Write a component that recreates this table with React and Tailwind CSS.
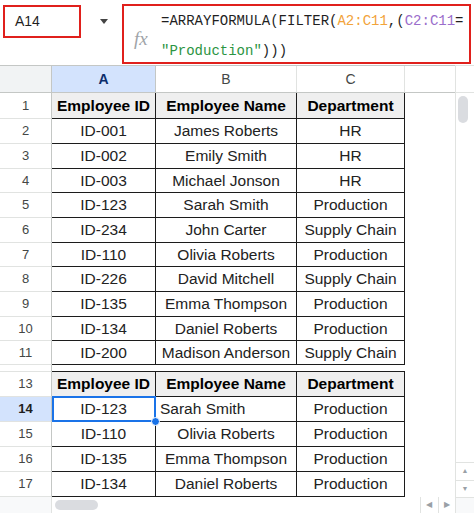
const top = [
  ["ID-001", "James Roberts", "HR"],
  ["ID-002", "Emily Smith", "HR"],
  ["ID-003", "Michael Jonson", "HR"],
  ["ID-123", "Sarah Smith", "Production"],
  ["ID-234", "John Carter", "Supply Chain"],
  ["ID-110", "Olivia Roberts", "Production"],
  ["ID-226", "David Mitchell", "Supply Chain"],
  ["ID-135", "Emma Thompson", "Production"],
  ["ID-134", "Daniel Roberts", "Production"],
  ["ID-200", "Madison Anderson", "Supply Chain"],
];

const result = [
  ["ID-123", "Sarah Smith", "Production"],
  ["ID-110", "Olivia Roberts", "Production"],
  ["ID-135", "Emma Thompson", "Production"],
  ["ID-134", "Daniel Roberts", "Production"],
];

const heights = ["h-[25px]", "h-[25px]", "h-[25px]", "h-[24px]", "h-[25px]", "h-[25px]", "h-[24px]", "h-[25px]", "h-[25px]", "h-[24px]", "h-[24px]"];

const RowNum = ({ n, active }) => (
  <div
    className={
      "w-[52px] shrink-0 flex items-center justify-center border-r border-b border-r-[#c4c7c5] border-b-[#e1e3e1] text-[13px] " +
      (active ? "bg-[#d3e3fd] font-bold text-[#1f1f1f]" : "bg-white text-[#444746]")
    }
  >
    {n}
  </div>
);

const Cell = ({ w, head, left, children }) => (
  <div
    className={
      w +
      " shrink-0 flex items-center border-r border-b border-[#1c1c1c] text-[15.5px] " +
      (left ? "justify-start pl-[4px] " : "justify-center ") +
      (head ? "bg-[#efefef] font-bold text-black" : "bg-white text-[#222]")
    }
  >
    {children}
  </div>
);

const Row = ({ n, h, cells, head, active }) => (
  <div className={"flex " + h}>
    <RowNum n={n} active={active} />
    {active ? (
      <div className="relative w-[104px] shrink-0 flex items-center justify-center border-r border-b border-[#1c1c1c] text-[15.5px] text-[#222]">
        {cells[0]}
        <div className="absolute left-[0px] top-[-1px] w-[104px] h-[26px] border-2 border-[#1a73e8]" />
        <div className="absolute right-[-5px] bottom-[-5px] w-[9px] h-[9px] rounded-full bg-[#1a73e8] border border-white z-10" />
      </div>
    ) : (
      <Cell w="w-[104px]" head={head}>{cells[0]}</Cell>
    )}
    <Cell w="w-[141px]" head={head} left={active}>{cells[1]}</Cell>
    <Cell w="w-[108px]" head={head}>{cells[2]}</Cell>
    <div className="w-[50px] shrink-0 bg-white" />
  </div>
);

export default function App() {
  const header = ["Employee ID", "Employee Name", "Department"];
  return (
    <div
      className="w-[474px] h-[513px] overflow-hidden bg-white text-[#222]"
      style={{ fontFamily: "'Liberation Sans', Arial, sans-serif" }}
    >
      {/* formula bar */}
      <div className="h-[65px] flex items-start">
        <div className="ml-[3px] mt-[5px] w-[78px] h-[33px] border-2 border-[#e0201c] flex items-center pl-[10px] text-[14px] text-[#1f1f1f]">
          A14
        </div>
        <div className="ml-[19px] mt-[19px] w-0 h-0 border-l-[4px] border-r-[4px] border-t-[5px] border-l-transparent border-r-transparent border-t-[#444]" />
        <div className="ml-[14px] mt-[4px] w-[349px] h-[60px] border-2 border-[#e0201c] flex items-start">
          <div
            className="w-[37px] pl-[10px] mt-[22px] italic text-[19px] leading-[22px] text-[#a0a4a8]"
            style={{ fontFamily: "'Liberation Serif', serif" }}
          >
            fx
          </div>
          <div
            className="text-[14px] leading-[30px] text-[#1f1f1f] whitespace-pre"
            style={{ fontFamily: "'Liberation Mono', monospace" }}
          >
            <div>
              =ARRAYFORMULA(FILTER(<span className="text-[#f2a33a]">A2:C11</span>,(<span className="text-[#9a6dcb]">C2:C11</span>=
            </div>
            <div>
              <span className="text-[#2b9442]">"Production"</span>)))
            </div>
          </div>
        </div>
      </div>

      <div className="flex">
        {/* grid */}
        <div className="w-[455px] shrink-0">
          <div className="flex h-[28px] border-t border-b border-[#c4c7c5] text-[14px]">
            <div className="w-[52px] bg-[#f1f3f4] border-r border-[#c4c7c5]" />
            <div className="w-[104px] bg-[#d3e3fd] border-r border-[#c4c7c5] flex items-center justify-center font-bold text-[#0b2e6b]">A</div>
            <div className="w-[141px] bg-white border-r border-[#e1e3e1] flex items-center justify-center text-[#444746]">B</div>
            <div className="w-[108px] bg-white border-r border-[#e1e3e1] flex items-center justify-center text-[#444746]">C</div>
            <div className="w-[50px] bg-white" />
          </div>

          <Row n={1} h="h-[26px]" cells={header} head />
          {top.map((r, i) => (
            <Row key={i} n={i + 2} h={heights[i + 1]} cells={r} />
          ))}

          {/* collapsed row 12 */}
          <div className="flex h-[7px]">
            <div className="w-[52px] overflow-hidden border-r border-b border-r-[#c4c7c5] border-b-[#e1e3e1] text-[13px] text-[#444746] text-center leading-none pt-[4px]">12</div>
            <div className="w-[353px] border-b border-[#1c1c1c]" />
          </div>

          <Row n={13} h="h-[25px]" cells={header} head />
          {result.map((r, i) => (
            <Row key={i} n={i + 14} h="h-[25px]" cells={r} active={i === 0} />
          ))}

          <div className="flex h-[16px] bg-white">
            <div className="w-[52px] bg-[#f8f9fa] border-r border-[#e1e3e1]" />
            <div className="ml-[3px] mt-[3px] w-[43px] h-[10px] rounded-full bg-[#dadce0]" />
            <div className="flex-1" />
            <div className="w-[35px] flex border-l border-[#e1e3e1] text-[8px] text-[#9aa0a6]">
              <div className="w-[18px] flex items-center justify-center border-r border-[#e1e3e1]">◀</div>
              <div className="w-[17px] flex items-center justify-center">▶</div>
            </div>
          </div>
        </div>

        {/* vertical scrollbar */}
        <div className="w-[19px] shrink-0 flex flex-col">
          <div className="h-[28px] border-t border-b border-l border-[#e1e3e1] bg-white" />
          <div className="h-[369px] border-l border-[#e1e3e1] bg-white pt-[3px] pl-[2px]">
            <div className="w-[10px] h-[27px] rounded-full bg-[#dadce0]" />
          </div>
          <div className="h-[18px] border-l border-t border-[#e1e3e1] flex items-center justify-center text-[7px] text-[#9aa0a6]">▲</div>
          <div className="h-[17px] border-l border-t border-[#e1e3e1] flex items-center justify-center text-[7px] text-[#9aa0a6]">▼</div>
          <div className="h-[16px] border-l border-t border-[#e1e3e1] bg-[#f8f9fa]" />
        </div>
      </div>
    </div>
  );
}
